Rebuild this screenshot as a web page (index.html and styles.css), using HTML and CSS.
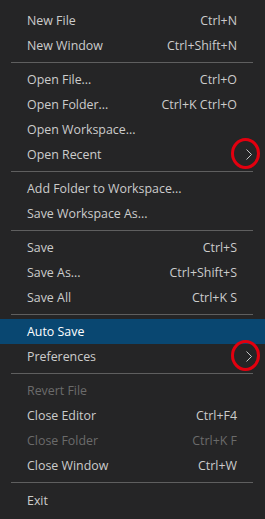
FILE: index.html
```html
<!DOCTYPE html>
<html>
<head>
<meta charset="utf-8">
<link rel="stylesheet" href="styles.css">
</head>
<body>
<div class="menu">
  <div class="item"><span class="label">New File</span><span class="key">Ctrl+N</span><span class="sub"></span></div>
  <div class="item"><span class="label">New Window</span><span class="key">Ctrl+Shift+N</span><span class="sub"></span></div>
  <div class="sep"></div>
  <div class="item"><span class="label">Open File...</span><span class="key">Ctrl+O</span><span class="sub"></span></div>
  <div class="item"><span class="label">Open Folder...</span><span class="key">Ctrl+K Ctrl+O</span><span class="sub"></span></div>
  <div class="item"><span class="label">Open Workspace...</span><span class="key"></span><span class="sub"></span></div>
  <div class="item"><span class="label">Open Recent</span><span class="key"></span><span class="sub"><svg class="chev" width="6" height="11" viewBox="0 0 6 11"><polyline points="0.5,0.5 5.5,5.5 0.5,10.5" fill="none" stroke="#c5c5c5" stroke-width="1"/></svg></span><span class="mark"></span></div>
  <div class="sep"></div>
  <div class="item"><span class="label">Add Folder to Workspace...</span><span class="key"></span><span class="sub"></span></div>
  <div class="item"><span class="label">Save Workspace As...</span><span class="key"></span><span class="sub"></span></div>
  <div class="sep"></div>
  <div class="item"><span class="label">Save</span><span class="key">Ctrl+S</span><span class="sub"></span></div>
  <div class="item"><span class="label">Save As...</span><span class="key">Ctrl+Shift+S</span><span class="sub"></span></div>
  <div class="item"><span class="label">Save All</span><span class="key">Ctrl+K S</span><span class="sub"></span></div>
  <div class="sep"></div>
  <div class="item active"><span class="label">Auto Save</span><span class="key"></span><span class="sub"></span></div>
  <div class="item"><span class="label">Preferences</span><span class="key"></span><span class="sub"><svg class="chev" width="6" height="11" viewBox="0 0 6 11"><polyline points="0.5,0.5 5.5,5.5 0.5,10.5" fill="none" stroke="#c5c5c5" stroke-width="1"/></svg></span><span class="mark"></span></div>
  <div class="sep"></div>
  <div class="item disabled"><span class="label">Revert File</span><span class="key"></span><span class="sub"></span></div>
  <div class="item"><span class="label">Close Editor</span><span class="key">Ctrl+F4</span><span class="sub"></span></div>
  <div class="item disabled"><span class="label">Close Folder</span><span class="key">Ctrl+K F</span><span class="sub"></span></div>
  <div class="item"><span class="label">Close Window</span><span class="key">Ctrl+W</span><span class="sub"></span></div>
  <div class="sep"></div>
  <div class="item"><span class="label">Exit</span><span class="key"></span><span class="sub"></span></div>
</div>
</body>
</html>
```
FILE: styles.css
```css
html, body {
  margin: 0;
  padding: 0;
  background: #252526;
}
body {
  width: 265px;
  height: 519px;
  overflow: hidden;
  font-family: "Open Sans", "Noto Sans", sans-serif;
  font-size: 12.4px;
  color: #cccccc;
}
.menu {
  display: flex;
  flex-direction: column;
  padding-top: 7.5px;
}
.item {
  position: relative;
  display: flex;
  align-items: center;
  height: 25px;
  padding-left: 27px;
  white-space: nowrap;
}
.label {
  flex: 1;
}
.key {
  text-align: right;
}
.sub {
  width: 28px;
  display: flex;
  align-items: center;
  justify-content: flex-start;
  padding-left: 9px;
  box-sizing: border-box;
}
.chev {
  display: block;
}
.active {
  background: #094771;
  color: #ffffff;
}
.disabled {
  color: #6b6b6b;
}
.sep {
  height: 1px;
  background: #5f5f5f;
  margin: 4px 12px 4.2px 11px;
}
.mark {
  position: absolute;
  left: 230.5px;
  top: -4px;
  width: 29px;
  height: 31px;
  border: 3.5px solid #e2000f;
  border-radius: 50%;
  box-sizing: border-box;
}
```
